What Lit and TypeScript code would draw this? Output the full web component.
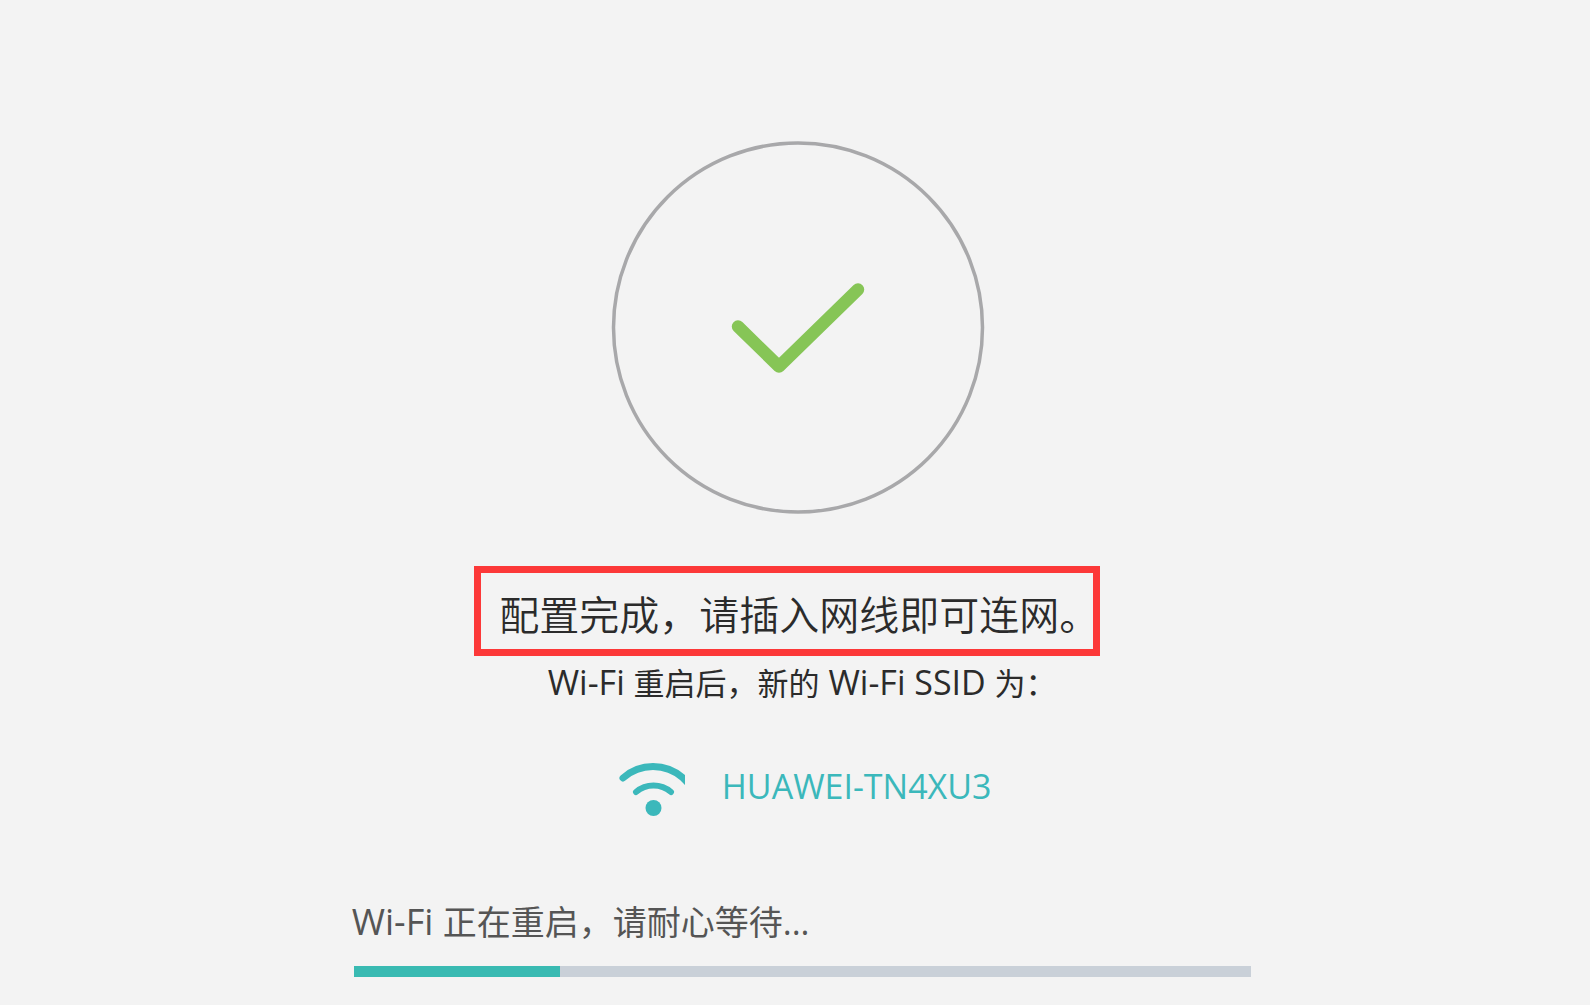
import { LitElement, html, css } from "lit";
import { customElement, property } from "lit/decorators.js";

@customElement("app-root")
export class AppRoot extends LitElement {
  @property({ type: String }) ssid = "HUAWEI-TN4XU3";
  @property({ type: Number }) progress = 23;

  static styles = css`
    :host {
      display: block;
      min-height: 100vh;
      box-sizing: border-box;
      background: #f3f3f3;
      color: #2b2b2b;
      font-family: "Open Sans", "Noto Sans CJK SC", sans-serif;
    }
    .page {
      display: flex;
      flex-direction: column;
      align-items: center;
      width: 56.4%;
      margin-left: 22.25%;
      padding: 140px 0 28px;
    }
    .badge {
      display: block;
      width: 374px;
      height: 374px;
      margin-right: 8px;
    }
    .title {
      box-sizing: border-box;
      width: 626px;
      margin: 52px 30px 0 0;
      padding: 4px 0 0 18px;
      border: 7px solid #fc3838;
      font-size: 40px;
      font-weight: 350;
      line-height: 72px;
      white-space: nowrap;
      font-family: "Noto Sans CJK SC", sans-serif;
    }
    .note {
      margin: 4px 0 0;
      font-size: 34px;
      line-height: 44px;
      white-space: nowrap;
    }
    .han {
      font-size: 31px;
    }
    .network {
      display: flex;
      align-items: flex-start;
      gap: 37px;
      margin: 55px 0 0 4px;
      color: #3bb8bb;
      font-size: 34px;
      line-height: 52px;
    }
    .wifi {
      display: block;
      width: 68px;
      height: 56px;
    }
    .status {
      display: flex;
      flex-direction: column;
      gap: 20px;
      width: 100%;
      margin-top: 82px;
      color: #555;
      font-size: 34px;
      line-height: 48px;
    }
    .label {
      margin-left: -2px;
    }
    .latin {
      font-size: 36px;
    }
    .bar {
      appearance: none;
      display: block;
      width: 100%;
      height: 11px;
      border: 0;
      background: #c9d0d8;
    }
    .bar::-webkit-progress-bar {
      background: #c9d0d8;
    }
    .bar::-webkit-progress-value {
      background: #39bab2;
    }
  `;

  render() {
    return html`
      <main class="page" lang="zh-CN">
        <svg class="badge" viewBox="0 0 374 374" fill="none" aria-hidden="true">
          <circle cx="187" cy="187.5" r="184.5" stroke="#a8a8aa" stroke-width="3.5" />
          <path
            d="M127 186.5L168 226.5L247 149.5"
            stroke="#86c556"
            stroke-width="12.5"
            stroke-linecap="round"
            stroke-linejoin="round"
          />
        </svg>
        <h1 class="title">配置完成，请插入网线即可连网。</h1>
        <p class="note">
          Wi-Fi <span class="han">重启后，新的</span> Wi-Fi SSID <span class="han">为：</span>
        </p>
        <div class="network">
          <svg class="wifi" viewBox="0 0 68 56" fill="none" aria-hidden="true">
            <g stroke="#3bb8bb" stroke-linecap="round">
              <path d="M6 18A45 45 0 0 1 66 18L72 24" stroke-width="7" />
              <path d="M19 32A27 27 0 0 1 54 32" stroke-width="6" />
            </g>
            <circle cx="36.5" cy="48" r="8" fill="#3bb8bb" />
          </svg>
          <span>${this.ssid}</span>
        </div>
        <div class="status">
          <label class="label" for="restart"
            ><span class="latin">Wi-Fi </span>正在重启，请耐心等待...</label
          >
          <progress class="bar" id="restart" max="100" .value=${this.progress}></progress>
        </div>
      </main>
    `;
  }
}
